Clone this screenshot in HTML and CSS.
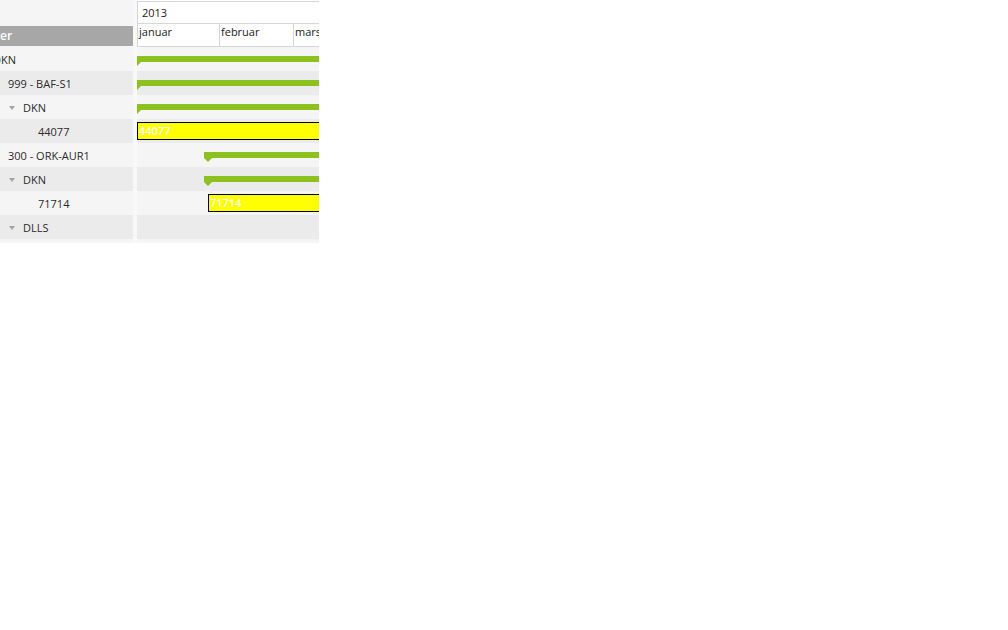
FILE: index.html
```html
<!DOCTYPE html>
<html>
<head>
<meta charset="utf-8">
<link rel="stylesheet" href="styles.css">
</head>
<body>
<div class="app">
  <div class="grid">
    <div class="grid-inner">
      <div class="grid-top"></div>
      <div class="grid-header">Order</div>
      <div class="grid-gap"></div>
      <div class="row light lvl0"><span class="exp"></span><span>DKN</span></div>
      <div class="row dark lvl1"><span class="exp"></span><span>999 - BAF-S1</span></div>
      <div class="row light lvl2"><span class="exp"></span><span>DKN</span></div>
      <div class="row dark lvl3"><span>44077</span></div>
      <div class="row light lvl1"><span class="exp"></span><span>300 - ORK-AUR1</span></div>
      <div class="row dark lvl2"><span class="exp"></span><span>DKN</span></div>
      <div class="row light lvl3"><span>71714</span></div>
      <div class="row dark lvl2"><span class="exp"></span><span>DLLS</span></div>
      <div class="row-end light"></div>
    </div>
  </div>
  <div class="splitter"></div>
  <div class="gantt">
    <div class="gantt-head">
      <div class="year">2013</div>
      <div class="months">
        <div class="month" style="width:82px">januar</div>
        <div class="month" style="width:74px">februar</div>
        <div class="month" style="width:82px">mars</div>
      </div>
    </div>
    <div class="tl-row light"><div class="summary" style="left:-4px"></div></div>
    <div class="tl-row dark"><div class="summary" style="left:-4px"></div></div>
    <div class="tl-row light"><div class="summary" style="left:-4px"></div></div>
    <div class="tl-row dark"><div class="task" style="left:0px">44077</div></div>
    <div class="tl-row light"><div class="summary" style="left:67px"></div></div>
    <div class="tl-row dark"><div class="summary" style="left:67px"></div></div>
    <div class="tl-row light"><div class="task" style="left:71px">71714</div></div>
    <div class="tl-row dark"></div>
    <div class="row-end light"></div>
  </div>
</div>
</body>
</html>
```

FILE: styles.css
```css
html, body {
  margin: 0;
  padding: 0;
  background: #ffffff;
}

body {
  font-family: "Open Sans", "Noto Sans", sans-serif;
  font-size: 11px;
  color: #2b2b2b;
}

.app {
  display: flex;
  align-items: flex-start;
}

.grid {
  width: 133px;
  overflow: hidden;
  background: #f5f5f5;
}

.grid-inner {
  margin-left: -30px;
  width: 200px;
}

.grid-top {
  height: 26px;
  background: #f5f5f5;
}

.grid-header {
  height: 20px;
  line-height: 20px;
  background: #a7a7a7;
  color: #ffffff;
  font-size: 12px;
  font-weight: 600;
  padding-left: 8px;
}

.grid-gap {
  height: 1px;
  background: #f5f5f5;
}

.row {
  height: 24px;
  display: flex;
  align-items: center;
  white-space: nowrap;
}

.light { background: #f5f5f5; }
.dark { background: #ebebeb; }

.lvl0 { padding-left: 9px; }
.lvl1 { padding-left: 24px; }
.lvl2 { padding-left: 39px; }
.lvl3 { padding-left: 68px; }

.exp {
  width: 0;
  height: 0;
  border-left: 3px solid transparent;
  border-right: 3px solid transparent;
  border-top: 4px solid #a3a3a3;
  margin-right: 8px;
  margin-top: 1px;
}

.row-end {
  height: 4px;
}

.splitter {
  width: 4px;
  height: 243px;
  background: #f8f8f8;
}

.gantt {
  width: 182px;
  overflow: hidden;
  background: #ffffff;
}

.gantt-head {
  margin-top: 1px;
  border: 1px solid #d6d6d6;
  border-right: none;
  background: #ffffff;
  width: 300px;
}

.year {
  height: 21px;
  line-height: 21px;
  padding-left: 4px;
  border-bottom: 1px solid #d6d6d6;
  font-size: 11px;
  color: #222;
}

.months {
  display: flex;
  height: 22px;
}

.month {
  box-sizing: border-box;
  border-right: 1px solid #d6d6d6;
  padding-left: 1px;
  line-height: 15px;
  color: #222;
  flex: none;
}

.tl-row {
  position: relative;
  height: 24px;
}

.summary {
  position: absolute;
  top: 9px;
  height: 6px;
  width: 400px;
  background: #8cc11f;
}

.summary::after {
  content: "";
  position: absolute;
  left: 0;
  top: 6px;
  width: 0;
  height: 0;
  border-left: 4px solid transparent;
  border-right: 4px solid transparent;
  border-top: 4px solid #8cc11f;
}

.task {
  position: absolute;
  top: 3px;
  height: 18px;
  width: 400px;
  box-sizing: border-box;
  border: 1px solid #000000;
  background: #ffff00;
  color: #ffffff;
  font-weight: 600;
  font-size: 11px;
  line-height: 15px;
  padding-left: 1px;
}
```
